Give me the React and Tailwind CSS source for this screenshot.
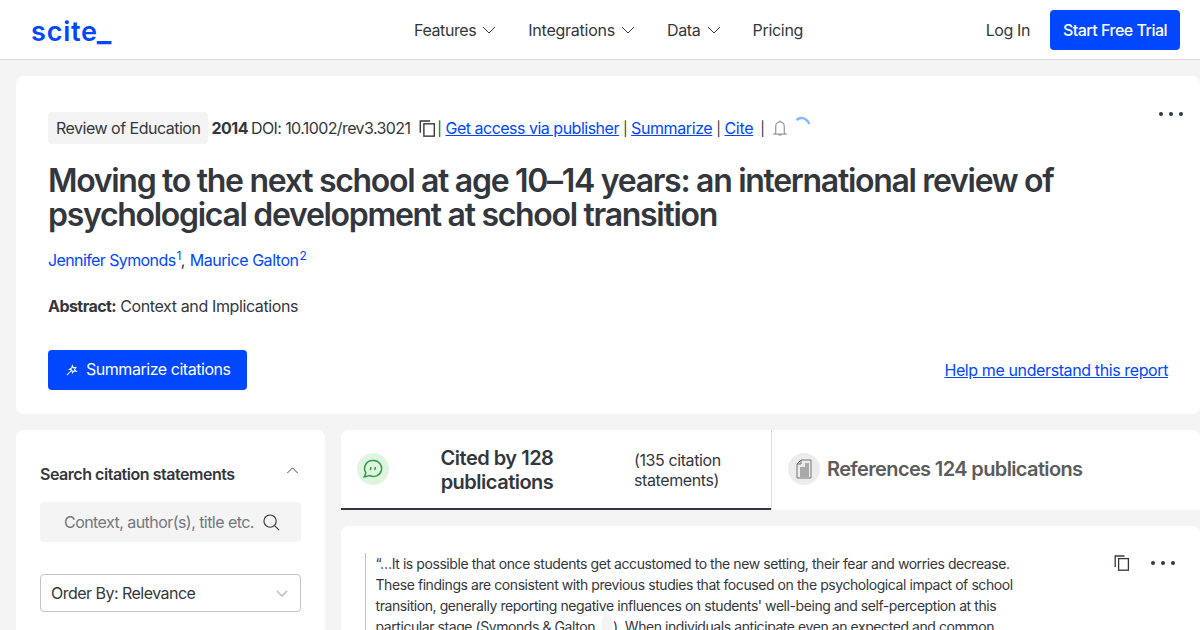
import React from "react";

const Chevron = ({ className }) => (
  <svg viewBox="0 0 14 8" className={className} fill="none" stroke="currentColor" strokeWidth="1">
    <path d="M1 1l6 6 6-6" />
  </svg>
);

const Copy = ({ className }) => (
  <svg viewBox="0 0 16 16" className={className} fill="none" stroke="currentColor" strokeWidth="1.3">
    <path d="M10.5 1H1.2v11" />
    <rect x="4.6" y="3.6" width="9.8" height="11.6" />
  </svg>
);

const Dots = ({ className = "" }) => (
  <div className={`flex gap-[6px] ${className}`}>
    <span className="w-[4px] h-[4px] rounded-full bg-[#33373d]" />
    <span className="w-[4px] h-[4px] rounded-full bg-[#33373d]" />
    <span className="w-[4px] h-[4px] rounded-full bg-[#33373d]" />
  </div>
);

const NavItem = ({ label, chevron = true, className = "tracking-[-0.3px]" }) => (
  <div className="flex items-center gap-[6px]">
    <span className={`text-[16px] text-[#33373d] ${className}`}>{label}</span>
    {chevron && <Chevron className="w-[14px] h-[8px] text-[#33373d]" />}
  </div>
);

const A = ({ children, className = "" }) => (
  <a className={`text-[#0047ff] underline ${className}`}>{children}</a>
);

export default function App() {
  return (
    <div className="w-[1200px] h-[630px] overflow-hidden bg-[#f4f4f4] font-['Inter',sans-serif] text-[#33373d]">
      <header className="h-[60px] bg-white border-b border-[#d9d9d9] flex items-center pl-[31px] pr-[20px]">
        <div className="w-[383px] text-[#0047ff] text-[27px] font-semibold leading-none tracking-[0.8px] whitespace-nowrap">
          scite<span className="text-[31px] tracking-normal -ml-[1px]">_</span>
        </div>
        <nav className="flex items-center gap-[32px]">
          <NavItem label="Features" className="tracking-[-0.4px]" />
          <NavItem label="Integrations" className="tracking-[-0.25px]" />
          <NavItem label="Data" />
          <NavItem label="Pricing" chevron={false} />
        </nav>
        <div className="ml-auto flex items-center gap-[20px]">
          <span className="text-[16px] tracking-[-0.4px]">Log In</span>
          <button className="w-[130px] h-[40px] rounded-[4px] bg-[#0047ff] text-white text-[16px] font-medium tracking-[-0.5px]">Start Free Trial</button>
        </div>
      </header>

      <section className="relative mt-[16px] ml-[16px] h-[338px] bg-white rounded-[8px] px-[32px] pt-[36px]">
        <Dots className="absolute right-[17px] top-[36px]" />
        <div className="flex items-center h-[32px] text-[16px] tracking-[-0.5px] whitespace-nowrap">
          <span className="h-[32px] px-[8px] flex items-center rounded-[4px] bg-[#f4f4f4]">Review of Education</span>
          <span className="ml-[3px] font-bold">2014</span>
          <span className="ml-[3px] tracking-[-0.6px]">DOI: 10.1002/rev3.3021</span>
          <Copy className="ml-[9px] w-[17px] h-[17px]" />
          <span className="ml-[1px] text-[14px]">|</span>
          <A className="ml-[4px]">Get access via publisher</A>
          <span className="ml-[4px] text-[14px]">|</span>
          <A className="ml-[4px] tracking-[-0.4px]">Summarize</A>
          <span className="ml-[4px] text-[14px]">|</span>
          <A className="ml-[4px] tracking-[-0.3px]">Cite</A>
          <span className="ml-[7px] text-[14px]">|</span>
          <svg viewBox="0 0 16 20" className="ml-[8px] w-[16px] h-[19px] text-[#9a9a9a]" fill="none" stroke="currentColor" strokeWidth="1.3">
            <path d="M3.5 14.5V7.500a4.500 4.500 0 0 1 9 0v7l1.500 1.300H2z" />
            <path d="M8 3V1.500M6.500 16a1.600 1.600 0 0 0 3 0" />
          </svg>
          <svg viewBox="0 0 16 10" className="ml-[7px] -mt-[14px] w-[16px] h-[10px] text-[#86b6fb]" fill="none" stroke="currentColor" strokeWidth="2.400">
            <path d="M1.500 4C5 1 10.500 .8 14.500 8" />
          </svg>
        </div>
        <h1 className="mt-[20px] w-[1060px] text-[32px] leading-[34px] font-semibold tracking-[-1.3px] text-[#33373d]">
          Moving to the next school at age 10–14 years: an international review of psychological development at school transition
        </h1>
        <div className="mt-[16px] h-[24px] text-[16px] tracking-[-0.6px] flex items-center">
          <span className="text-[#0047ff]">Jennifer Symonds<sup className="text-[12px] ml-[1px]">1</sup></span>
          <span>,&nbsp;</span>
          <span className="ml-[1px] text-[#0047ff] tracking-[-0.45px]">Maurice Galton<sup className="text-[12px] ml-[1px]">2</sup></span>
        </div>
        <p className="mt-[22px] text-[16px] leading-[24px] tracking-[-0.38px]">
          <b className="font-bold tracking-[-0.55px]">Abstract:</b> Context and Implications
        </p>
        <div className="mt-[32px] flex items-center justify-between">
          <button className="w-[199px] h-[40px] pb-[2px] rounded-[4px] bg-[#0047ff] text-white text-[16px] tracking-[-0.46px] flex items-center pl-[18px] gap-[8px]">
            <svg viewBox="0 0 14 14" className="w-[12px] h-[12px] mt-[2px]" fill="none" stroke="currentColor" strokeWidth="1.200">
              <path d="M1 13l6-6M7.500 2l1 2.500 3-.5-1.500 2.500 2 2-3-.3-1.500 2-.7-3-2.800-1 2.500-1.500z" />
            </svg>
            Summarize citations
          </button>
          <A className="text-[16px] tracking-[-0.39px]">Help me understand this report</A>
        </div>
      </section>

      <div className="mt-[16px] ml-[16px] flex gap-[16px] items-start">
        <aside className="w-[309px] h-[220px] shrink-0 bg-white rounded-[8px] px-[24px] pt-[34px]">
          <div className="flex items-start justify-between pr-[2px]">
            <span className="text-[16px] leading-[20px] font-semibold tracking-[-0.47px]">Search citation statements</span>
            <Chevron className="mt-[3px] w-[13px] h-[7px] rotate-180" />
          </div>
          <div className="mt-[18px] h-[40px] rounded-[4px] bg-[#f4f4f4] flex items-center pl-[24px] gap-[9px] text-[16px] text-[#737780] tracking-[-0.55px]">
            Context, author(s), title etc.
            <svg viewBox="0 0 18 18" className="w-[17px] h-[17px] text-[#33373d]" fill="none" stroke="currentColor" strokeWidth="1.2">
              <circle cx="7.500" cy="7.500" r="6.500" />
              <path d="M12.300 12.300L17 17" />
            </svg>
          </div>
          <div className="mt-[32px] h-[38px] rounded-[4px] border border-[#c4c4c4] flex items-center justify-between pl-[10px] pr-[12px] text-[16px] tracking-[-0.52px]">
            Order By: Relevance
            <Chevron className="w-[12px] h-[7px] text-[#c4c4c4] stroke-2" />
          </div>
        </aside>

        <main className="flex-1 min-w-0">
          <div className="flex h-[80px] bg-white rounded-t-[8px]">
            <div className="w-[431px] h-[80px] border-b-2 border-[#33373d] flex items-center pl-[16px]">
              <div className="w-[32px] h-[32px] rounded-full bg-[#e0f5e0] flex items-center justify-center">
                <svg viewBox="0 0 20 20" className="w-[20px] h-[20px] text-[#2e9e47]" fill="none" stroke="currentColor" strokeWidth="1.500">
                  <path d="M10.500 1.500a8 8 0 1 1-3.800 15L1.200 18l1.700-4.200A8 8 0 0 1 10.500 1.500z" />
                  <path d="M7.800 8v1.300c0 .7-.3 1.200-.9 1.500M12.300 8v1.300c0 .7-.3 1.200-.9 1.500" />
                </svg>
              </div>
              <div className="ml-[30px] pt-[1px] w-[156px] text-center text-[20px] leading-[24px] font-semibold tracking-[-0.5px]">Cited by 128 publications</div>
              <div className="ml-[59px] pt-[1px] text-[16px] leading-[20px] tracking-[-0.4px]">(135 citation<br />statements)</div>
            </div>
            <div className="flex-1 border-l border-[#e0e0e0] flex items-center pl-[16px] pb-[2px] -ml-[1px]">
              <div className="w-[32px] h-[32px] rounded-full bg-[#ececec] flex items-center justify-center">
                <svg viewBox="0 0 16 20" className="w-[16px] h-[20px] text-[#666666]" fill="none" stroke="currentColor" strokeWidth="0.9">
                  <path d="M5 1h10v18H1V5zM5 1v4H1" />
                  <path d="M9 5h4M9 7h4M4 9h9M4 11h9M4 13h9M4 15h9M4 17h9" strokeWidth="1" />
                </svg>
              </div>
              <span className="ml-[7px] text-[20px] font-semibold tracking-[-0.63px] text-[#5c5c5c]">References 124 publications</span>
            </div>
          </div>

          <div className="relative mt-[16px] h-[104px] overflow-hidden bg-white rounded-t-[8px] pl-[24px] pt-[27px]">
            <div className="absolute right-[25px] top-[29px] flex items-center gap-[21px]">
              <Copy className="w-[16px] h-[16px]" />
              <Dots />
            </div>
            <blockquote className="w-[660px] border-l border-[#c4c4c4] pl-[9.5px] text-[14px] leading-[21px] tracking-[-0.43px]">
              “…It is possible that once students get accustomed to the new setting, their fear and worries decrease. These findings are consistent with previous studies that focused on the psychological impact of school transition, generally reporting negative influences on students' well-being and self-perception at this particular stage (Symonds &amp; Galton<span className="inline-block w-[10px] h-[21px] ml-[7px] mr-[1px] align-top rounded-[3px] bg-[#f4f4f4]" />). When individuals anticipate even an expected and common
            </blockquote>
          </div>
        </main>
      </div>
    </div>
  );
}
